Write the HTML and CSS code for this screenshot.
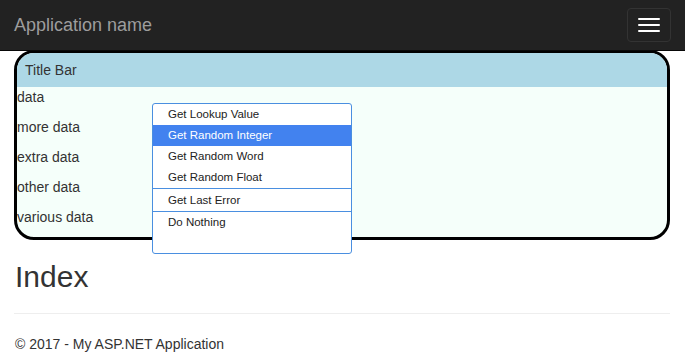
FILE: index.html
```html
<!DOCTYPE html>
<html>
<head>
<meta charset="utf-8">
<title>Index</title>
<link rel="stylesheet" href="styles.css">
</head>
<body>
<nav class="navbar">
  <a class="brand" href="#">Application name</a>
  <button class="toggle" type="button" aria-label="Toggle navigation">
    <span class="bar"></span><span class="bar"></span><span class="bar"></span>
  </button>
</nav>
<div class="body-content">
  <div class="stage">
    <div class="card">
      <div class="title-bar">Title Bar</div>
      <div class="card-body">
        <p>data</p>
        <p>more data</p>
        <p>extra data</p>
        <p>other data</p>
        <p>various data</p>
      </div>
    </div>
    <ul class="menu">
      <li class="item">Get Lookup Value</li>
      <li class="item active">Get Random Integer</li>
      <li class="item">Get Random Word</li>
      <li class="item">Get Random Float</li>
      <li class="sep"></li>
      <li class="item tall">Get Last Error</li>
      <li class="sep"></li>
      <li class="item">Do Nothing</li>
    </ul>
  </div>
  <h2 class="page-title">Index</h2>
  <hr class="rule">
  <footer class="footer"><p>&copy; 2017 - My ASP.NET Application</p></footer>
</div>
</body>
</html>
```
FILE: styles.css
```css
* { box-sizing: border-box; }
html, body { margin: 0; padding: 0; }
body {
  font-family: "Liberation Sans", Arial, Helvetica, sans-serif;
  font-size: 14px;
  line-height: 20px;
  color: #333;
  background: #fff;
}
.navbar {
  height: 51px;
  background: #222;
  border-bottom: 1px solid #080808;
  display: flex;
  align-items: center;
  justify-content: space-between;
  padding: 0 14px 0 14px;
  position: relative;
  z-index: 2;
}
.brand {
  color: #9d9d9d;
  font-size: 18px;
  line-height: 20px;
  text-decoration: none;
  margin-top: -1px;
}
.toggle {
  width: 44px;
  height: 34px;
  border: 1px solid #333;
  border-radius: 4px;
  background: transparent;
  display: flex;
  flex-direction: column;
  align-items: center;
  justify-content: center;
  gap: 4px;
  padding: 0;
  margin-top: -1px;
}
.bar {
  display: block;
  width: 22px;
  height: 2px;
  background: #fff;
  border-radius: 1px;
}
.body-content {
  padding: 0 15px 0 14px;
  margin-top: -1px;
}
.stage { position: relative; }
.card {
  border: 3px solid #000;
  border-radius: 20px;
  overflow: hidden;
  background: #f5fffa;
}
.title-bar {
  background: #add8e6;
  height: 34px;
  line-height: 34px;
  padding-left: 8px;
}
.card-body p {
  margin: 0 0 10px;
  line-height: 20px;
}
.menu {
  position: absolute;
  left: 138px;
  top: 53px;
  width: 200px;
  height: 151px;
  margin: 0;
  padding: 0 0 18px;
  list-style: none;
  background: #fff;
  border: 1px solid #4a8fe0;
  border-radius: 3px;
  font-family: "Liberation Sans", Arial, sans-serif;
  font-size: 11.5px;
  z-index: 3;
}
.item {
  height: 21px;
  line-height: 21px;
  padding-left: 15px;
  color: #222;
}
.item.tall { height: 22px; line-height: 22px; }
.item.active {
  background: #4282ef;
  color: #fff;
}
.sep {
  height: 1px;
  background: #4a8fe0;
}
.page-title {
  font-size: 30px;
  font-weight: 500;
  line-height: 33px;
  margin: 20px 0 0;
  padding-left: 1px;
}
.rule {
  border: 0;
  border-top: 1px solid #eee;
  margin: 20px 0 20px;
}
.footer p {
  margin: 0;
  padding-left: 1px;
}
```
